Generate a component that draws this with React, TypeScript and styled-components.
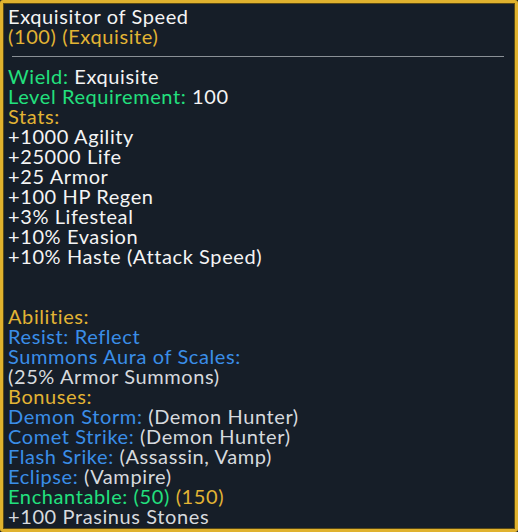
import styled, { createGlobalStyle } from "styled-components";

const GlobalStyle = createGlobalStyle`
  html, body {
    margin: 0;
    padding: 0;
    background: #161e28;
  }
`;

type Tone = "white" | "gold" | "green" | "blue" | "gray";

const colors: Record<Tone, string> = {
  white: "#f4f4f4",
  gold: "#e2b434",
  green: "#22e07e",
  blue: "#3a8ee8",
  gray: "#d6dade",
};

const Tooltip = styled.div`
  box-sizing: border-box;
  width: 518px;
  height: 532px;
  background: #161e28;
  border: 3px solid #e0b22e;
  box-shadow: inset 0 0 0 1px #5a4a14;
  border-radius: 3px;
  padding: 3px 8px 0 5px;
  font-family: "Lato", "Open Sans", sans-serif;
  font-size: 20px;
  letter-spacing: 0.6px;
  line-height: 20px;
  overflow: hidden;
`;

const Line = styled.div`
  height: 20px;
  white-space: nowrap;
`;

const Span = styled.span<{ $tone: Tone }>`
  color: ${(p) => colors[p.$tone]};
`;

const Separator = styled.div`
  height: 20px;
  display: flex;
  align-items: center;
  padding: 0 3px 0 4px;

  &::after {
    content: "";
    flex: 1;
    height: 1px;
    background: #8a9096;
  }
`;

const Blank = styled.div`
  height: 20px;
`;

type Part = [string, Tone];

const Row = ({ parts }: { parts: Part[] }) => (
  <Line>
    {parts.map(([text, tone], i) => (
      <Span key={i} $tone={tone}>
        {text}
      </Span>
    ))}
  </Line>
);

const stats = [
  "+1000 Agility",
  "+25000 Life",
  "+25 Armor",
  "+100 HP Regen",
  "+3% Lifesteal",
  "+10% Evasion",
  "+10% Haste (Attack Speed)",
];

const bonuses: [string, string][] = [
  ["Demon Storm:", "(Demon Hunter)"],
  ["Comet Strike:", "(Demon Hunter)"],
  ["Flash Srike:", "(Assassin, Vamp)"],
  ["Eclipse:", "(Vampire)"],
];

export default function App() {
  return (
    <>
      <GlobalStyle />
      <Tooltip>
        <Row parts={[["Exquisitor of Speed", "white"]]} />
        <Row parts={[["(100) (Exquisite)", "gold"]]} />
        <Separator />
        <Row parts={[["Wield: ", "green"], ["Exquisite", "white"]]} />
        <Row parts={[["Level Requirement: ", "green"], ["100", "white"]]} />
        <Row parts={[["Stats:", "gold"]]} />
        {stats.map((s) => (
          <Row key={s} parts={[[s, "white"]]} />
        ))}
        <Blank />
        <Blank />
        <Row parts={[["Abilities:", "gold"]]} />
        <Row parts={[["Resist: Reflect", "blue"]]} />
        <Row parts={[["Summons Aura of Scales:", "blue"]]} />
        <Row parts={[["(25% Armor Summons)", "gray"]]} />
        <Row parts={[["Bonuses:", "gold"]]} />
        {bonuses.map(([a, b]) => (
          <Row key={a} parts={[[a + " ", "blue"], [b, "gray"]]} />
        ))}
        <Row
          parts={[
            ["Enchantable: (50) ", "green"],
            ["(150)", "gold"],
          ]}
        />
        <Row parts={[["+100 Prasinus Stones", "gray"]]} />
      </Tooltip>
    </>
  );
}
